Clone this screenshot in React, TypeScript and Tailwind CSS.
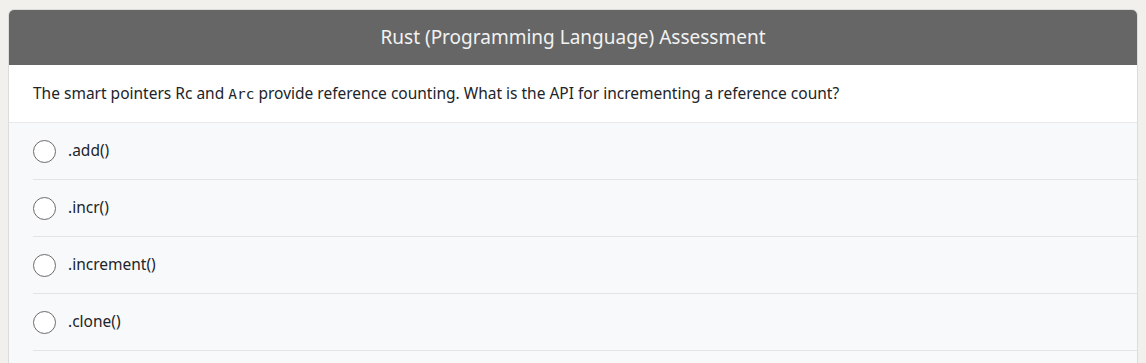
import React from 'react';

const options = ['.add()', '.incr()', '.increment()', '.clone()'];

export default function App() {
  return (
    <div className="min-h-screen bg-[#f1f0ed] px-2 pt-[9px] font-['Noto_Sans',sans-serif] text-[#212529]">
      <div className="rounded-t-[6px] border border-[#dcdcdc] bg-white overflow-hidden">
        <div className="h-[56px] -mx-px -mt-px bg-[#666666] flex items-center justify-center">
          <h1 className="text-[19px] text-[#f2f2f2]">Rust (Programming Language) Assessment</h1>
        </div>
        <div className="h-[58px] flex items-center px-6 border-b border-[#e6e8ea] text-[15.5px]">
          <p>
            The smart pointers Rc and{' '}
            <code className="font-['DejaVu_Sans_Mono',monospace] text-[14.5px]">Arc</code> provide reference counting. What is the
            API for incrementing a reference count?
          </p>
        </div>
        <div className="bg-[#f8f9fb] pl-6">
          {options.map((o) => (
            <label key={o} className="h-[57px] flex items-center gap-3 border-b border-[#e3e4e6] text-[15.5px] cursor-pointer">
              <span className="w-[23px] h-[23px] rounded-full border border-[#6b6b6b] bg-white shrink-0" />
              <span>{o}</span>
            </label>
          ))}
          <div className="h-[20px]" />
        </div>
      </div>
    </div>
  );
}
